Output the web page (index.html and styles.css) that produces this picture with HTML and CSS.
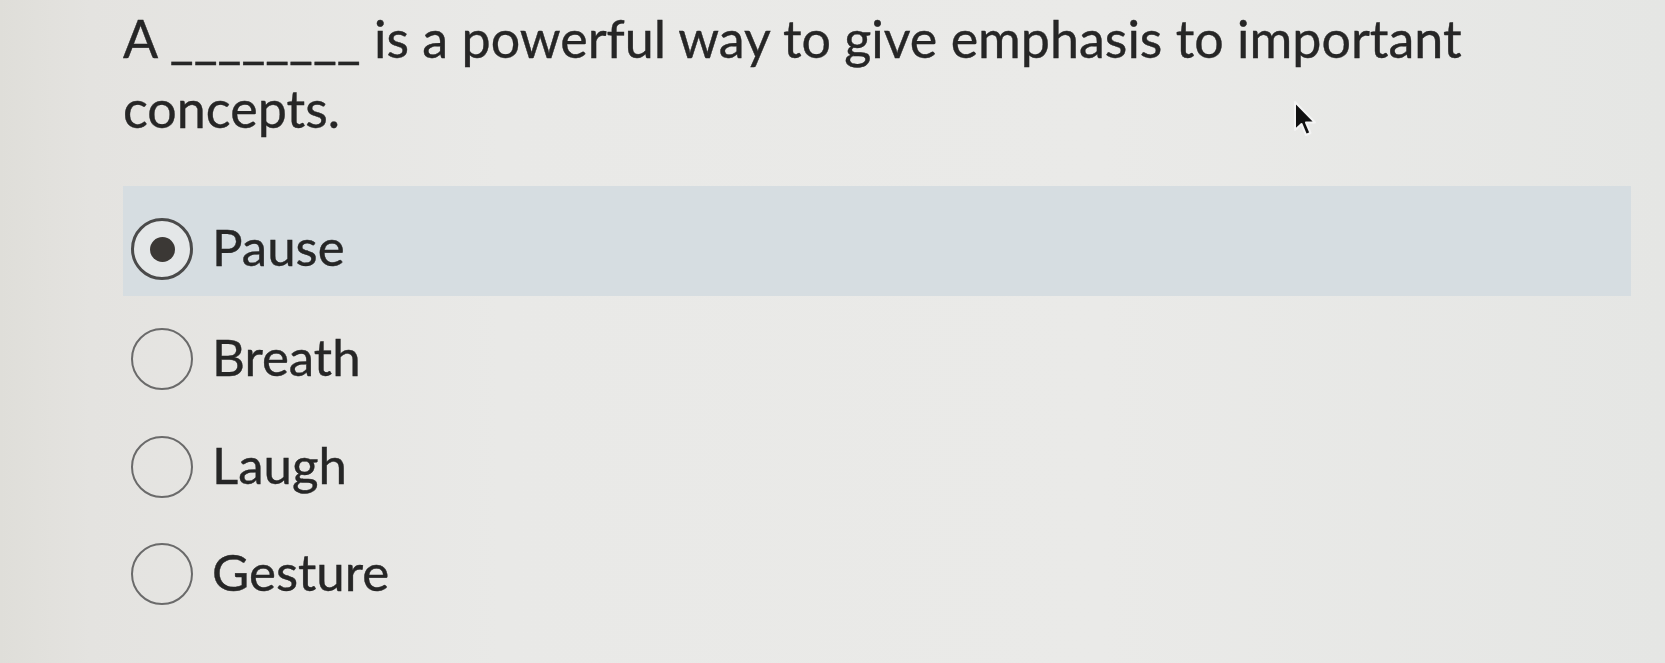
FILE: index.html
```html
<!DOCTYPE html>
<html lang="en">
<head>
<meta charset="utf-8">
<title>Quiz question</title>
<link rel="stylesheet" href="styles.css">
</head>
<body>
<main class="page">
  <p class="question">A ________ is a powerful way to give emphasis to important concepts.</p>
  <div class="options">
    <label class="option selected">
      <span class="radio"><span class="dot"></span></span>
      <span class="label">Pause</span>
    </label>
    <label class="option">
      <span class="radio"></span>
      <span class="label">Breath</span>
    </label>
    <label class="option">
      <span class="radio"></span>
      <span class="label">Laugh</span>
    </label>
    <label class="option">
      <span class="radio"></span>
      <span class="label">Gesture</span>
    </label>
  </div>
  <svg class="cursor" width="26" height="40" viewBox="0 0 26 40" aria-hidden="true">
    <path d="M2 2 L2 30 L8.5 24 L13 35 L17.5 33 L13 22.5 L22 22.5 Z" fill="#111" stroke="#f4f4f4" stroke-width="2" stroke-linejoin="round"/>
  </svg>
</main>
</body>
</html>
```

FILE: styles.css
```css
html, body {
  margin: 0;
  padding: 0;
}

body {
  width: 1665px;
  height: 663px;
  overflow: hidden;
  background: linear-gradient(90deg, #dfded9 0px, #e4e3e0 90px, #e9e9e7 500px, #eaeae8 1100px, #e5e6e4 1665px);
  font-family: Lato, "Open Sans", sans-serif;
  color: #262626;
}

.page {
  position: relative;
  height: 663px;
  padding: 3px 0 0 123px;
  box-sizing: border-box;
}

.question {
  margin: 0;
  width: 1420px;
  font-size: 52px;
  line-height: 70px;
  -webkit-text-stroke: 0.4px #262626;
}

.options {
  margin-top: 43px;
  display: flex;
  flex-direction: column;
  width: 1508px;
}

.option {
  display: flex;
  align-items: flex-start;
  gap: 19px;
  height: 107.5px;
  padding: 32px 0 0 8px;
  box-sizing: border-box;
}

.option.selected {
  background: #d6dde1;
  height: 110px;
}

.radio {
  width: 62px;
  height: 62px;
  box-sizing: border-box;
  border: 2.5px solid #6a6a6a;
  border-radius: 50%;
  display: flex;
  align-items: center;
  justify-content: center;
  flex: none;
}

.option.selected .radio {
  border: 3px solid #4a4a4a;
  background: #e4e7e8;
}

.dot {
  width: 25px;
  height: 25px;
  border-radius: 50%;
  background: #3b3835;
}

.label {
  margin-top: 1px;
  font-size: 51px;
  line-height: 56px;
  -webkit-text-stroke: 0.4px #262626;
}

.cursor {
  position: absolute;
  left: 1293px;
  top: 100px;
}
```
